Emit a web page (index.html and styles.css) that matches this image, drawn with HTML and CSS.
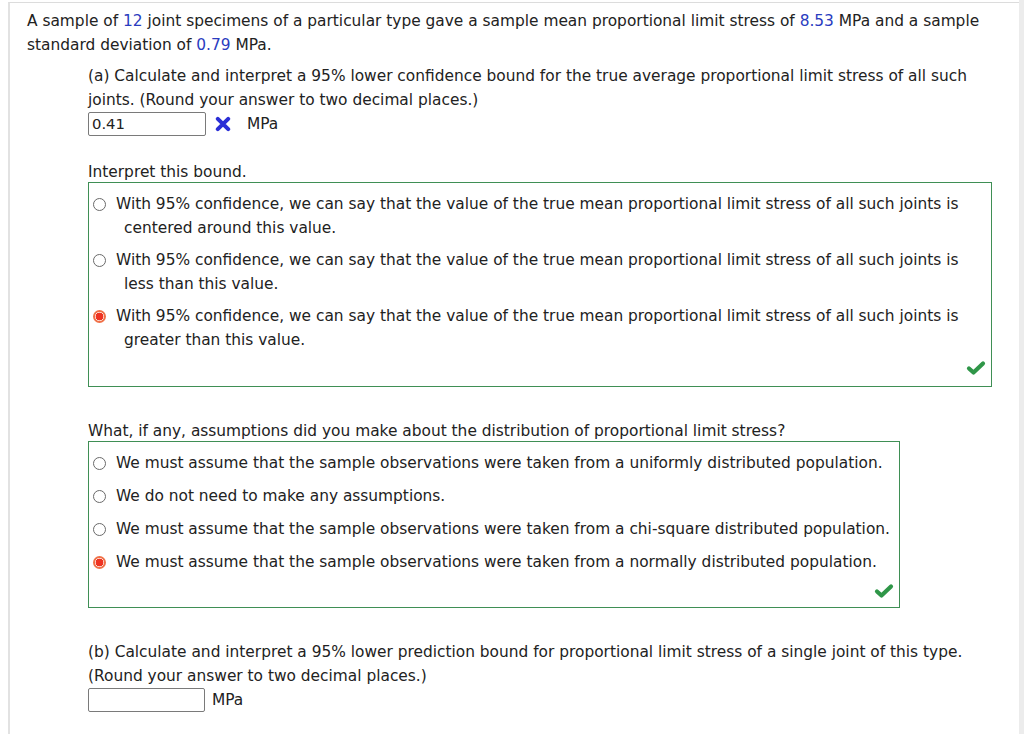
FILE: index.html
```html
<!DOCTYPE html>
<html>
<head>
<meta charset="utf-8">
<link rel="stylesheet" href="styles.css">
</head>
<body>
<div class="frame">
  <p class="intro">A sample of <span class="num">12</span> joint specimens of a particular type gave a sample mean proportional limit stress of <span class="num">8.53</span> MPa and a sample standard deviation of <span class="num">0.79</span> MPa.</p>

  <div class="part">
    <p class="q">(a) Calculate and interpret a 95% lower confidence bound for the true average proportional limit stress of all such joints. (Round your answer to two decimal places.)</p>
    <div class="answer">
      <span class="field">0.41</span>
      <svg class="xmark" width="16" height="16" viewBox="0 0 16 16"><path d="M2.8 2.8 L13.2 13.2 M13.2 2.8 L2.8 13.2" stroke="#2b2fd6" stroke-width="4" stroke-linecap="round"/></svg>
      <span class="unit unit-x">MPa</span>
    </div>

    <p class="label">Interpret this bound.</p>
    <div class="choices choices-1">
      <div class="opt"><span class="radio"></span><span class="txt">With 95% confidence, we can say that the value of the true mean proportional limit stress of all such joints is centered around this value.</span></div>
      <div class="opt"><span class="radio"></span><span class="txt">With 95% confidence, we can say that the value of the true mean proportional limit stress of all such joints is less than this value.</span></div>
      <div class="opt"><span class="radio on"></span><span class="txt">With 95% confidence, we can say that the value of the true mean proportional limit stress of all such joints is greater than this value.</span></div>
      <div class="check-row"><svg class="check" width="20" height="16" viewBox="0 0 20 16"><path d="M3 8.5 L7.5 12.5 L17 3.5" fill="none" stroke="#2f9648" stroke-width="4.2" stroke-linecap="round" stroke-linejoin="round"/></svg></div>
    </div>

    <p class="label label-2">What, if any, assumptions did you make about the distribution of proportional limit stress?</p>
    <div class="choices choices-2">
      <div class="opt single"><span class="radio"></span><span class="txt">We must assume that the sample observations were taken from a uniformly distributed population.</span></div>
      <div class="opt single"><span class="radio"></span><span class="txt">We do not need to make any assumptions.</span></div>
      <div class="opt single"><span class="radio"></span><span class="txt">We must assume that the sample observations were taken from a chi-square distributed population.</span></div>
      <div class="opt single"><span class="radio on"></span><span class="txt">We must assume that the sample observations were taken from a normally distributed population.</span></div>
      <div class="check-row check-row-2"><svg class="check" width="20" height="16" viewBox="0 0 20 16"><path d="M3 8.5 L7.5 12.5 L17 3.5" fill="none" stroke="#2f9648" stroke-width="4.2" stroke-linecap="round" stroke-linejoin="round"/></svg></div>
    </div>

    <p class="q q-b">(b) Calculate and interpret a 95% lower prediction bound for proportional limit stress of a single joint of this type. (Round your answer to two decimal places.)</p>
    <div class="answer">
      <span class="field field-b"></span>
      <span class="unit">MPa</span>
    </div>
  </div>
</div>
<div class="scroll"></div>
</body>
</html>
```

FILE: styles.css
```css
html, body {
  margin: 0;
  padding: 0;
  background: #ffffff;
}
body {
  font-family: "DejaVu Sans", Verdana, sans-serif;
  font-size: 15.4px;
  line-height: 24px;
  color: #222222;
  position: relative;
  height: 734px;
  overflow: hidden;
}
.frame {
  margin: 2px 0 0 8px;
  border-top: 1px solid #dcdcdc;
  border-left: 2px solid #e2e2e2;
  padding: 6px 20px 0 17px;
  height: 740px;
  box-sizing: border-box;
  width: 1011px;
}
.scroll {
  position: absolute;
  right: 0;
  top: 0;
  width: 5px;
  height: 734px;
  background: #ececec;
}
p { margin: 0; }
.num { color: #2a3cc0; }
.intro { width: 966px; }
.part {
  margin-left: 61px;
  margin-top: 7px;
}
.q { width: 900px; }
.answer {
  display: flex;
  align-items: center;
  height: 24px;
}
.field {
  box-sizing: border-box;
  width: 118px;
  height: 24px;
  border: 1px solid #7a7a7a;
  border-radius: 2px;
  padding: 0 3px;
  line-height: 22px;
  font-size: 14.8px;
}
.field-b { width: 117px; }
.xmark { margin-left: 9px; }
.unit { margin-left: 7px; }
.unit.unit-x { margin-left: 16px; }
.label { margin-top: 24px; }
.label-2 { margin-top: 32px; }
.choices {
  box-sizing: border-box;
  border: 1px solid #3f8f55;
  padding: 9px 0 0 4px;
  margin-top: -2px;
}
.choices-1 { width: 904px; height: 205px; }
.choices-2 { width: 812px; height: 167px; }
.opt {
  display: flex;
  align-items: flex-start;
  margin-bottom: 8px;
}
.opt.single { margin-bottom: 9px; }
.radio {
  flex: none;
  box-sizing: border-box;
  width: 13px;
  height: 13px;
  border: 1.5px solid #6a6a6a;
  border-radius: 50%;
  margin-top: 6px;
  margin-right: 10px;
  margin-left: 0;
}
.radio.on {
  border: 2px solid #f07048;
  background: radial-gradient(circle, #ee3322 0 3.6px, #ffffff 4.2px);
}
.txt {
  flex: 1;
  padding-left: 8px;
  text-indent: -8px;
  padding-right: 20px;
}
.choices-2 .txt { padding-right: 0; }
.check-row {
  display: flex;
  justify-content: flex-end;
  padding-right: 5px;
  margin-top: 5px;
}
.check-row-2 { margin-top: 2px; }
.q-b { margin-top: 32px; }
```
